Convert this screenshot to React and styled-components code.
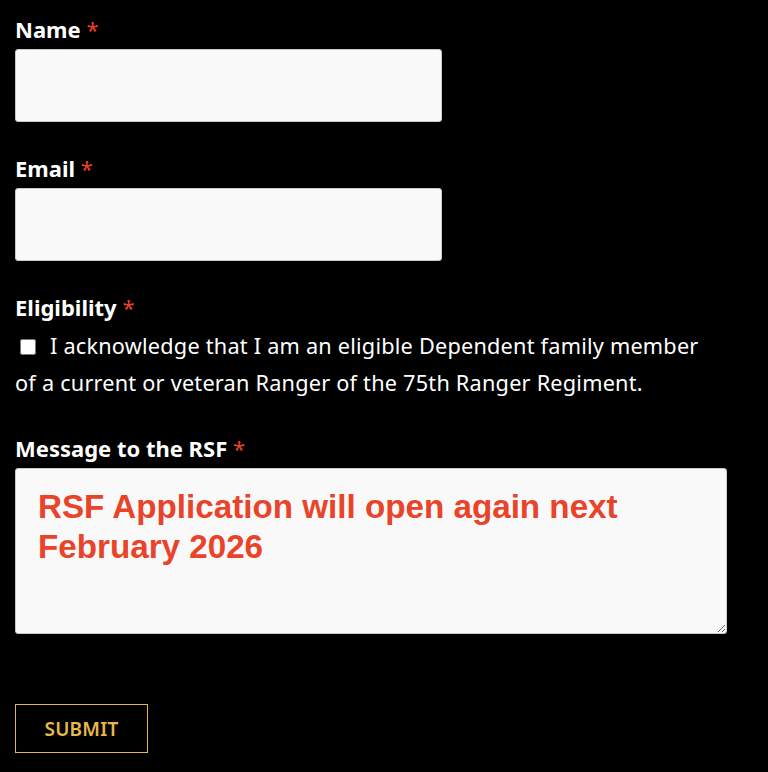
import React from 'react';
import styled, { createGlobalStyle } from 'styled-components';

const GlobalStyle = createGlobalStyle`
  html, body {
    margin: 0;
    padding: 0;
    background: #000;
  }
  body {
    font-family: "Noto Sans", "Open Sans", sans-serif;
    color: #fff;
  }
`;

const Form = styled.form`
  display: flex;
  flex-direction: column;
  padding: 14px 15px 0 15px;
  width: 768px;
  box-sizing: border-box;
`;

const Field = styled.div`
  display: flex;
  flex-direction: column;
  margin-bottom: ${props => props.gap}px;
`;

const Label = styled.label`
  font-size: 22px;
  font-weight: 700;
  line-height: 31px;
  margin-bottom: 4px;
`;

const Required = styled.span`
  color: #e8432b;
  font-weight: 400;
`;

const TextInput = styled.input`
  box-sizing: border-box;
  width: 427px;
  height: 73px;
  background: #f9f9f9;
  border: 1px solid #c9c9c9;
  border-radius: 3px;
  font-size: 18px;
  padding: 0 12px;
  outline: none;
`;

const CheckRow = styled.div`
  font-size: 21.7px;
  letter-spacing: 0.22px;
  line-height: 37px;
  width: 704px;
`;

const Check = styled.input`
  width: 16px;
  height: 16px;
  margin: 0 14px 0 5px;
  vertical-align: -1px;
  accent-color: #fff;
`;

const Message = styled.textarea`
  box-sizing: border-box;
  width: 712px;
  height: 166px;
  background: #f9f9f9;
  border: 1px solid #c9c9c9;
  border-radius: 3px;
  padding: 18px 22px 12px;
  resize: vertical;
  outline: none;
  font-family: "Liberation Sans", Arial, sans-serif;
  font-weight: 700;
  font-size: 33.2px;
  line-height: 40px;
  color: #e9432a;
  &::placeholder {
    color: #e9432a;
    opacity: 1;
  }
`;

const Submit = styled.button`
  align-self: flex-start;
  width: 133px;
  height: 49px;
  background: transparent;
  border: 1.5px solid #e6b64c;
  color: #e8b84a;
  font-family: "Noto Sans", "Open Sans", sans-serif;
  font-size: 19px;
  font-weight: 600;
  letter-spacing: 0.2px;
  text-transform: uppercase;
  cursor: pointer;
`;

export default function App() {
  return (
    <>
      <GlobalStyle />
      <Form onSubmit={e => e.preventDefault()}>
        <Field gap={31}>
          <Label>Name <Required>*</Required></Label>
          <TextInput type="text" />
        </Field>
        <Field gap={31}>
          <Label>Email <Required>*</Required></Label>
          <TextInput type="email" />
        </Field>
        <Field gap={32}>
          <Label>Eligibility <Required>*</Required></Label>
          <CheckRow>
            <Check type="checkbox" />
            I acknowledge that I am an eligible Dependent family member of a current or veteran Ranger of the 75th Ranger Regiment.
          </CheckRow>
        </Field>
        <Field gap={70}>
          <Label>Message to the RSF <Required>*</Required></Label>
          <Message placeholder="RSF Application will open again next February 2026" />
        </Field>
        <Submit type="submit">Submit</Submit>
      </Form>
    </>
  );
}
